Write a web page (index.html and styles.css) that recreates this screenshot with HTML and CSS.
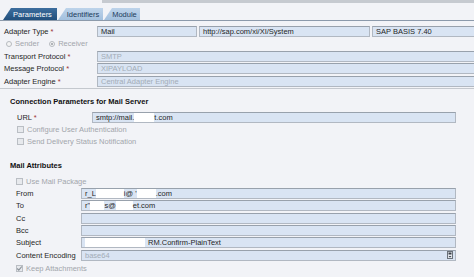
FILE: index.html
```html
<!DOCTYPE html>
<html lang="en">
<head>
    <meta charset="UTF-8">
    <meta name="viewport" content="width=device-width, initial-scale=1.0">
    <title>Mail Adapter - Parameters</title>
    <link rel="stylesheet" href="styles.css">
</head>
<body>
    <div class="topband"></div>
    <div class="tabs">
        <div class="tab active">Parameters</div>
        <div class="tab tab-ident">Identifiers</div>
        <div class="tab tab-module">Module</div>
    </div>

    <div class="general">
        <div class="row">
            <span class="lbl">Adapter Type <span class="req">*</span></span>
            <div class="field f-mail">Mail</div>
            <div class="field f-ns">http://sap.com/xi/XI/System</div>
            <div class="field f-swc">SAP BASIS 7.40</div>
        </div>
        <div class="row radios">
            <span class="radio"></span><span class="dim">Sender</span>
            <span class="radio on"></span><span class="dim">Receiver</span>
        </div>
        <div class="row">
            <span class="lbl">Transport Protocol <span class="req">*</span></span>
            <div class="field wide off">SMTP</div>
        </div>
        <div class="row">
            <span class="lbl">Message Protocol <span class="req">*</span></span>
            <div class="field wide off">XIPAYLOAD</div>
        </div>
        <div class="row">
            <span class="lbl">Adapter Engine <span class="req">*</span></span>
            <div class="field wide off">Central Adapter Engine</div>
        </div>
    </div>

    <div class="conn">
        <h3>Connection Parameters for Mail Server</h3>
        <div class="row">
            <span class="lbl">URL <span class="req">*</span></span>
            <div class="field">smtp://mail.<span class="redact r-url"></span>t.com</div>
        </div>
        <div class="row check">
            <span class="box"></span><span class="dim">Configure User Authentication</span>
        </div>
        <div class="row check">
            <span class="box"></span><span class="dim">Send Delivery Status Notification</span>
        </div>
    </div>

    <div class="mail">
        <h3>Mail Attributes</h3>
        <div class="row check">
            <span class="box"></span><span class="dim">Use Mail Package</span>
        </div>
        <div class="row">
            <span class="lbl">From</span>
            <div class="field">r_L<span class="redact r-from1"></span>i@ '<span class="redact r-from2"></span>.com</div>
        </div>
        <div class="row">
            <span class="lbl">To</span>
            <div class="field">r''<span class="redact r-to1"></span>s@<span class="redact r-to2"></span>et.com</div>
        </div>
        <div class="row">
            <span class="lbl">Cc</span>
            <div class="field"></div>
        </div>
        <div class="row">
            <span class="lbl">Bcc</span>
            <div class="field"></div>
        </div>
        <div class="row">
            <span class="lbl">Subject</span>
            <div class="field"><span class="redact r-subj"></span>RM.Confirm-PlainText</div>
        </div>
        <div class="row">
            <span class="lbl">Content Encoding</span>
            <div class="field off select">
                <span>base64</span>
                <svg class="drop" width="6" height="8" viewBox="0 0 6 8">
                    <rect x="0.5" y="0.5" width="5" height="7" fill="#e4e8ee" stroke="#6a717a"/>
                    <rect x="1.5" y="1.5" width="3" height="2" fill="#3a4048"/>
                    <path d="M1.5 5 L4.5 5 L3 6.5 Z" fill="#3a4048"/>
                </svg>
            </div>
        </div>
        <div class="row check">
            <span class="box checked">
                <svg width="7" height="7" viewBox="0 0 7 7"><path d="M1.2 3.5 L2.8 5.2 L5.8 1.5" fill="none" stroke="#8a9098" stroke-width="1.1"/></svg>
            </span><span class="dim">Keep Attachments</span>
        </div>
    </div>
</body>
</html>
```

FILE: styles.css
```css
body {
    margin: 0;
    background-color: #f2f3f7;
    font-family: "Liberation Sans", Arial, sans-serif;
    font-size: 7.5px;
    color: #262626;
    overflow: hidden;
}
.topband {
    height: 3px;
    margin-left: 102px;
    background-color: #c6cad0;
}
.tabs {
    display: flex;
    gap: 1px;
    padding: 5px 0 0 3px;
    border-bottom: 1px solid #8c9aab;
}
.tab {
    height: 12px;
    display: flex;
    align-items: center;
    justify-content: center;
    padding-left: 5px;
    box-sizing: border-box;
    clip-path: polygon(8px 0, 100% 0, 100% 100%, 0 100%);
    background: linear-gradient(#bdd3ea, #a3c0de);
    color: #1d3b5c;
}
.tab.active {
    width: 54px;
    background: linear-gradient(#3d6e9e, #22507d);
    color: #fff;
}
.tab-ident {
    width: 45px;
}
.tab-module {
    width: 36px;
}
.row {
    display: flex;
    align-items: center;
    height: 12px;
}
.lbl {
    flex: none;
}
.req {
    color: #9c3434;
}
.dim {
    color: #a2a6ac;
}
.field {
    height: 11px;
    box-sizing: border-box;
    display: flex;
    align-items: center;
    padding-left: 3px;
    background-color: #d9e4f3;
    border: 1px solid #b1b8c2;
    border-top-color: #98a1ac;
    white-space: nowrap;
    overflow: hidden;
}
.field.off {
    color: #a3acb7;
}
.redact {
    display: inline-block;
    height: 9px;
    background-color: #fff;
}

/* general section */
.general {
    padding: 4px 0 0 4px;
    border-bottom: 1px solid #c4c8ce;
}
.general .row {
    height: 12.4px;
}
.general .lbl {
    width: 93px;
}
.f-mail {
    width: 100px;
}
.f-ns {
    width: 171px;
    margin-left: 2px;
}
.f-swc {
    flex: 1;
    margin-left: 2px;
    margin-right: -2px;
}
.field.wide {
    flex: 1;
    margin-right: -2px;
}
.general .radios {
    height: 13px;
    padding-left: 2px;
}
.radio {
    width: 6px;
    height: 6px;
    box-sizing: border-box;
    border: 1px solid #b6babf;
    border-radius: 50%;
    background-color: #f4f4f4;
    margin-right: 3px;
    position: relative;
}
.radio + .dim {
    margin-right: 10px;
}
.radio.on::after {
    content: "";
    position: absolute;
    left: 1px;
    top: 1px;
    width: 2px;
    height: 2px;
    border-radius: 50%;
    background-color: #9a9ea4;
}

h3 {
    margin: 0;
    padding-left: 10px;
    font-size: 7.5px;
    line-height: 10px;
    color: #111;
}

/* connection section */
.conn {
    padding-top: 8px;
}
.conn h3 {
    margin-bottom: 4.5px;
}
.conn .row {
    padding-left: 17px;
}
.conn .lbl {
    width: 75px;
}
.conn .field {
    width: 364px;
}
.check .box {
    width: 7px;
    height: 7px;
    box-sizing: border-box;
    border: 1px solid #babec4;
    background-color: #e7e9ed;
    margin-right: 3px;
    display: flex;
}
.check .box svg {
    margin: -1px;
}
.r-url {
    width: 20px;
}

/* mail section */
.mail {
    padding-top: 14px;
}
.mail h3 {
    margin-bottom: 4px;
}
.mail .row {
    padding-left: 16px;
    height: 12.4px;
}
.mail .lbl {
    width: 65px;
}
.mail .field {
    width: 375px;
}
.mail .check {
    height: 12px;
}
.mail .check:last-child {
    margin-top: 1.5px;
}
.r-from1 {
    width: 28px;
}
.r-from2 {
    width: 19px;
}
.r-to1 {
    width: 14px;
}
.r-to2 {
    width: 17px;
}
.r-subj {
    width: 60px;
    margin-right: 3px;
}
.select {
    justify-content: space-between;
    padding-right: 2px;
}
```
